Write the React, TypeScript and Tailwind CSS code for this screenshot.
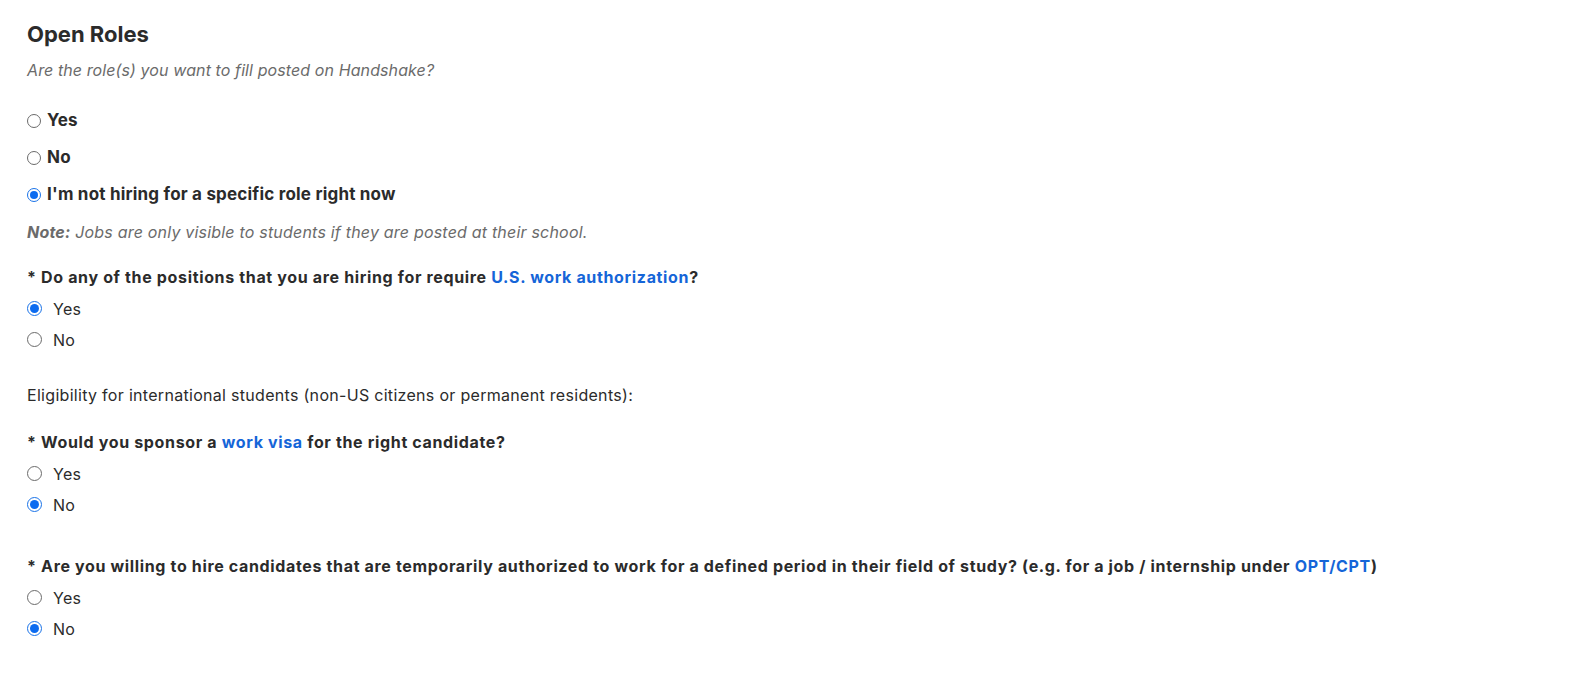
import { ReactNode } from 'react';

function Radio({ checked, size = 'sm' }: { checked?: boolean; size?: 'sm' | 'md' }) {
  const box = size === 'sm' ? 'h-[14px] w-[14px]' : 'h-[15px] w-[15px]';
  const dot = size === 'sm' ? 'h-[8px] w-[8px]' : 'h-[9px] w-[9px]';
  return (
    <span
      className={`inline-flex shrink-0 items-center justify-center rounded-full border bg-white ${box} ${
        checked ? 'border-[#1a73e8]' : 'border-[#6b6b6b]'
      }`}
    >
      {checked && <span className={`rounded-full bg-[#0b6bf0] ${dot}`} />}
    </span>
  );
}

function Option({ label, checked }: { label: string; checked?: boolean }) {
  return (
    <label className="flex h-[31px] items-center gap-[11px] text-[16px] tracking-[0.3px] text-[#2b2b2b]">
      <Radio checked={checked} size="md" />
      <span>{label}</span>
    </label>
  );
}

function Question({ children, value }: { children: ReactNode; value: 'yes' | 'no' }) {
  return (
    <div className="flex flex-col">
      <p className="mb-[5px] text-[16px] font-bold leading-[22px] tracking-[0.65px] text-[#2b2b2b]">{children}</p>
      <Option label="Yes" checked={value === 'yes'} />
      <Option label="No" checked={value === 'no'} />
    </div>
  );
}

function Link({ children }: { children: ReactNode }) {
  return <a className="text-[#1565d8]">{children}</a>;
}

export default function App() {
  const roleOptions = [
    { label: 'Yes', checked: false },
    { label: 'No', checked: false },
    { label: "I'm not hiring for a specific role right now", checked: true },
  ];

  return (
    <main className="min-h-screen bg-white px-[27px] pt-[22px] font-['Inter',sans-serif] text-[#2b2b2b]">
      <h2 className="text-[22px] font-bold leading-[24px]">Open Roles</h2>
      <p className="mt-[13px] text-[16px] italic leading-[22px] tracking-[0.1px] text-[#6b6b6b]">
        Are the role(s) you want to fill posted on Handshake?
      </p>

      <div className="mt-[21px] flex flex-col">
        {roleOptions.map((o) => (
          <label key={o.label} className="flex h-[37px] items-center gap-[6px] text-[17px] font-bold tracking-[0.2px]">
            <Radio checked={o.checked} />
            <span>{o.label}</span>
          </label>
        ))}
      </div>

      <p className="mt-[8px] text-[16px] italic leading-[22px] tracking-[0.2px] text-[#6b6b6b]">
        <span className="font-bold">Note:</span> Jobs are only visible to students if they are posted at their school.
      </p>

      <div className="mt-[23px]">
        <Question value="yes">
          * Do any of the positions that you are hiring for require <Link>U.S. work authorization</Link>?
        </Question>
      </div>

      <p className="mt-[29px] text-[16px] leading-[22px] tracking-[0.3px]">
        Eligibility for international students (non-US citizens or permanent residents):
      </p>

      <div className="mt-[25px]">
        <Question value="no">
          * Would you sponsor a <Link>work visa</Link> for the right candidate?
        </Question>
      </div>

      <div className="mt-[35px]">
        <Question value="no">
          * Are you willing to hire candidates that are temporarily authorized to work for a defined period in their
          field of study? (e.g. for a job / internship under <Link>OPT/CPT</Link>)
        </Question>
      </div>
    </main>
  );
}
